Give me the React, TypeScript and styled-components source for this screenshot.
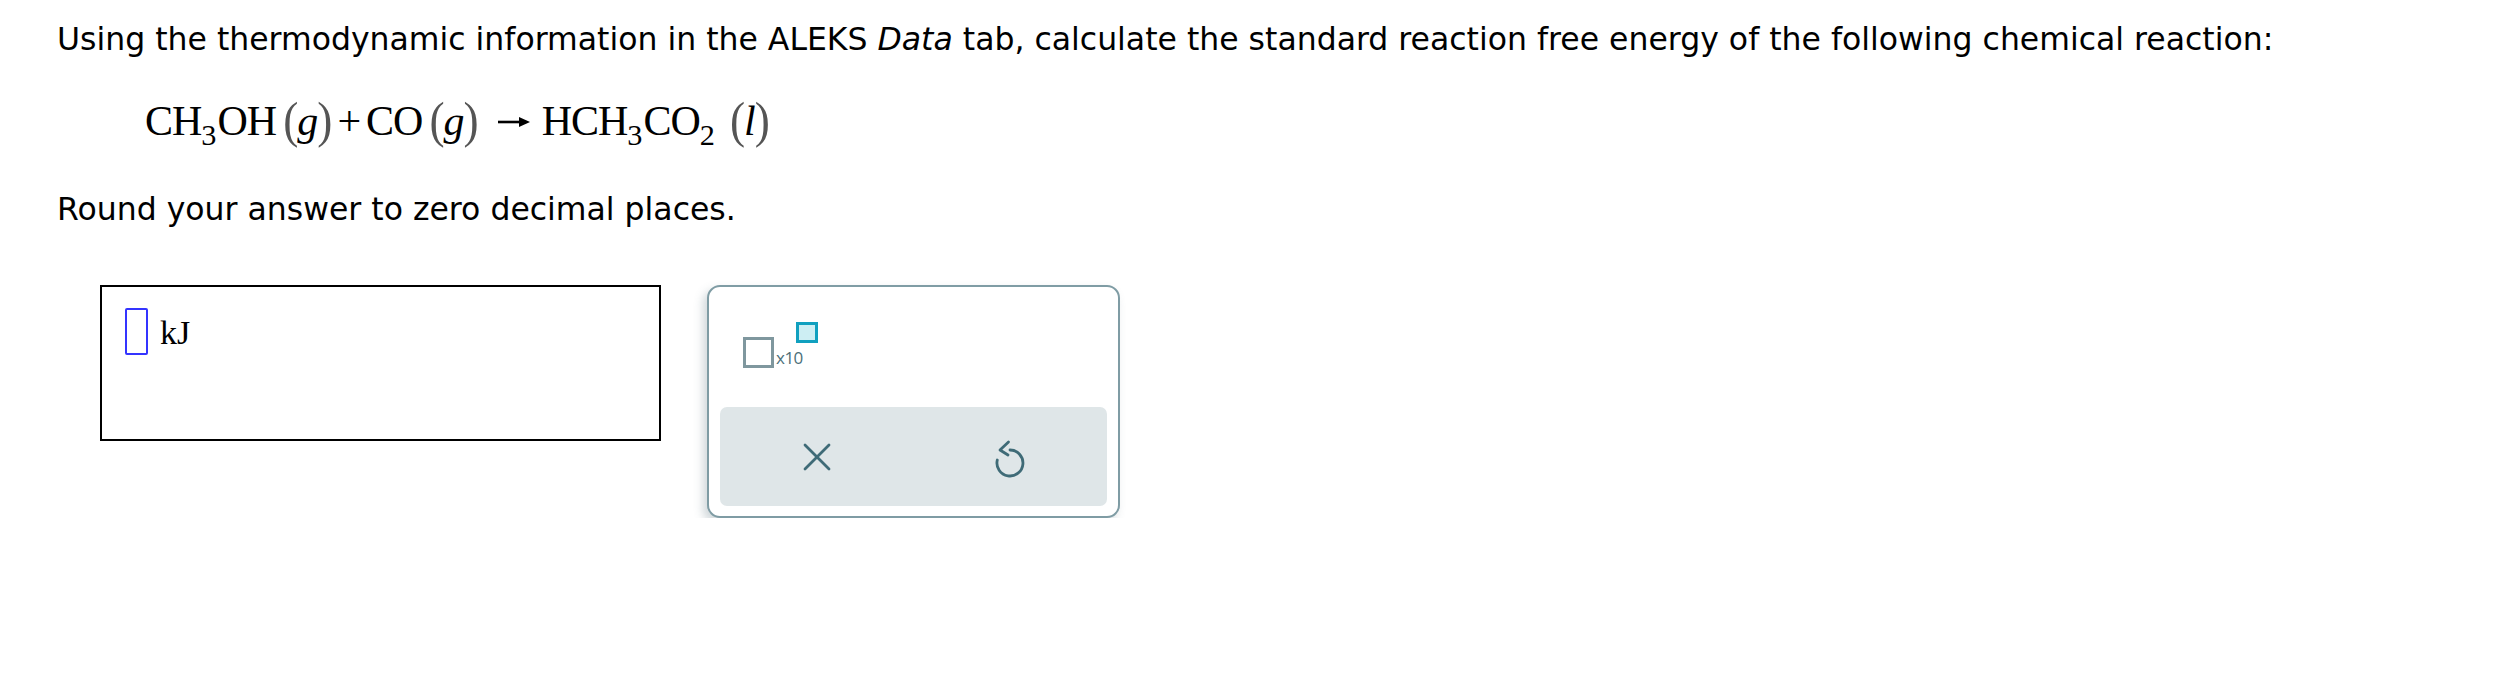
import React from 'react';
import styled, { createGlobalStyle } from 'styled-components';

const GlobalStyle = createGlobalStyle`
  body {
    margin: 0;
    background: #fff;
  }
`

const Page = styled.div`
  padding: 20px 0 0 57px;
  font-family: "DejaVu Sans", Verdana, sans-serif;
  color: #000;
`

const Prompt = styled.p<{ $top?: number }>`
  margin: ${p => p.$top || 0}px 0 0 0;
  font-size: 31.5px;
  line-height: 38px;
  white-space: nowrap;
`

const Equation = styled.div`
  margin: 32px 0 0 88px;
  height: 60px;
  display: flex;
  align-items: baseline;
  font-family: "Liberation Serif", "Times New Roman", serif;
  font-size: 42px;
  line-height: 60px;
  letter-spacing: -1px;
`

const Sub = styled.span`
  font-size: 0.72em;
  position: relative;
  top: 0.32em;
  margin-right: 2px;
`

const Paren = styled.span`
  display: inline-block;
  color: #555;
  font-size: 1.08em;
  transform: scaleY(1.12);
`

const Italic = styled.span`
  font-style: italic;
`

const Op = styled.span`
  margin: 0 6px;
`

const Gap = styled.span<{ $w: number }>`
  display: inline-block;
  width: ${p => p.$w}px;
`

const ArrowGlyph = styled.svg`
  width: 34px;
  height: 12px;
  align-self: center;
  margin: 4px 11px 0 19px;
`

const AnswerRow = styled.div`
  display: flex;
  align-items: flex-start;
  margin: 57px 0 0 43px;
`

const AnswerBox = styled.div`
  box-sizing: border-box;
  width: 561px;
  height: 156px;
  border: 2px solid #000;
  padding: 21px 0 0 23px;
  display: flex;
  align-items: flex-start;
  gap: 12px;
`

const Cursor = styled.div`
  box-sizing: border-box;
  width: 23px;
  height: 47px;
  border: 2px solid #3434ff;
  border-radius: 2px;
`

const Unit = styled.span`
  font-family: "Liberation Serif", "Times New Roman", serif;
  font-size: 34px;
  line-height: 47px;
  margin-top: 1px;
`

const Keypad = styled.div`
  box-sizing: border-box;
  margin-left: 46px;
  width: 413px;
  height: 233px;
  border: 2px solid #7f9ca4;
  border-radius: 13px;
  background: #fff;
  box-shadow: -4px 5px 10px rgba(70, 100, 110, 0.25);
  padding: 0 11px 10px 11px;
  display: flex;
  flex-direction: column;
`

const KeyArea = styled.div`
  flex: 1;
  padding: 35px 0 0 23px;
`

const SciKey = styled.div`
  display: flex;
  align-items: flex-start;
  font-family: "Open Sans", "DejaVu Sans", sans-serif;
  color: #4c6f79;
`

const Mantissa = styled.div`
  box-sizing: border-box;
  width: 31px;
  height: 31px;
  margin-top: 15px;
  border: 3px solid #7f979e;
`

const Times10 = styled.span`
  font-size: 17px;
  line-height: 17px;
  margin: 27px 0 0 2px;
  letter-spacing: -0.5px;
`

const Exponent = styled.div`
  box-sizing: border-box;
  width: 22px;
  height: 21px;
  margin-left: -7px;
  border: 3px solid #10a0bf;
  background: #cdeef3;
`

const ActionBar = styled.div`
  height: 99px;
  border-radius: 7px;
  background: #dfe6e8;
  display: grid;
  grid-template-columns: 1fr 1fr;
`

const ActionButton = styled.button<{ $drop?: number }>`
  border: none;
  background: transparent;
  padding: ${p => p.$drop || 0}px 0 0 0;
  display: flex;
  align-items: center;
  justify-content: center;
  color: #3f6b77;
  cursor: pointer;
`

const App = () => {
  return <>
    <GlobalStyle />
    <Page>
      <Prompt>
        Using the thermodynamic information in the ALEKS <Italic>Data</Italic> tab, calculate the standard reaction free energy of the following chemical reaction:
      </Prompt>
      <Equation>
        <span>CH</span><Sub>3</Sub><span>OH</span>
        <Gap $w={7} />
        <Paren>(</Paren><Italic>g</Italic><Paren>)</Paren>
        <Op>+</Op>
        <span>CO</span>
        <Gap $w={7} />
        <Paren>(</Paren><Italic>g</Italic><Paren>)</Paren>
        <ArrowGlyph viewBox="0 0 34 12">
          <line x1="1" y1="6" x2="24" y2="6" stroke="#000" strokeWidth="2.6" />
          <polygon points="22,1 33,6 22,11" fill="#000" />
        </ArrowGlyph>
        <span>HCH</span><Sub>3</Sub><span>CO</span><Sub>2</Sub>
        <Gap $w={14} />
        <Paren>(</Paren><Italic>l</Italic><Paren>)</Paren>
      </Equation>
      <Prompt $top={40}>
        Round your answer to zero decimal places.
      </Prompt>
      <AnswerRow>
        <AnswerBox>
          <Cursor />
          <Unit>kJ</Unit>
        </AnswerBox>
        <Keypad>
          <KeyArea>
            <SciKey>
              <Mantissa />
              <Times10>x10</Times10>
              <Exponent />
            </SciKey>
          </KeyArea>
          <ActionBar>
            <ActionButton aria-label="clear">
              <svg width="28" height="28" viewBox="0 0 28 28" fill="none" stroke="currentColor" strokeWidth="2.8" strokeLinecap="round">
                <line x1="2" y1="2" x2="26" y2="26" />
                <line x1="26" y1="2" x2="2" y2="26" />
              </svg>
            </ActionButton>
            <ActionButton aria-label="undo" $drop={6}>
              <svg width="30" height="40" viewBox="0 0 30 40" fill="none" stroke="currentColor" strokeWidth="2.8" strokeLinecap="round" strokeLinejoin="round">
                <path d="M15 10 A13 13 0 1 1 2.3 20" />
                <path d="M13.5 2 L5 10 L13 15" />
              </svg>
            </ActionButton>
          </ActionBar>
        </Keypad>
      </AnswerRow>
    </Page>
  </>
}

export default App;
